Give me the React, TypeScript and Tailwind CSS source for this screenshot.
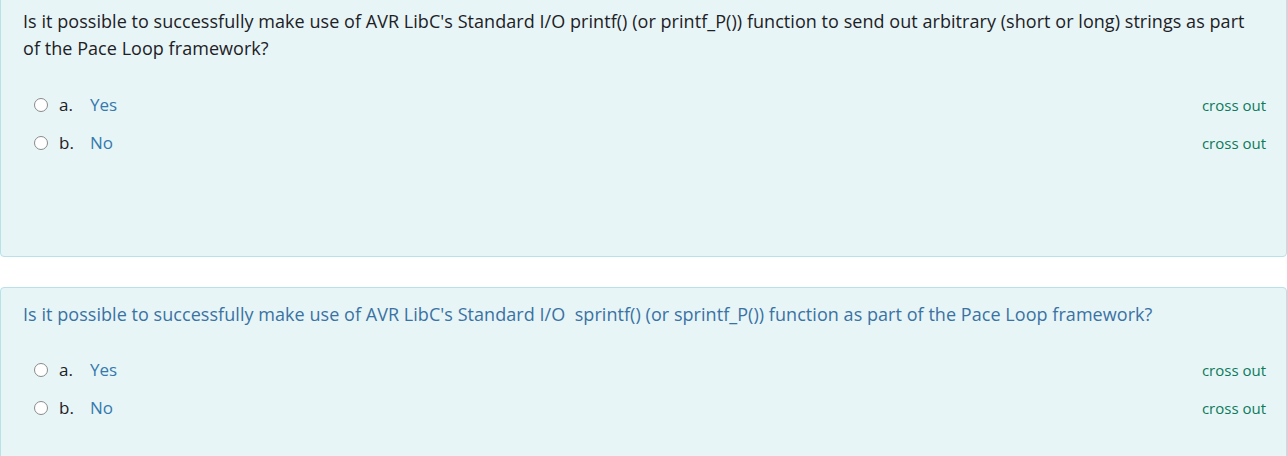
import React from "react";

type Question = {
  text: React.ReactNode;
  tone: "dark" | "blue";
  first?: boolean;
};

const OPTIONS = [
  { key: "a.", label: "Yes" },
  { key: "b.", label: "No" },
];

function Option({ k, label }: { k: string; label: string }) {
  return (
    <div className="flex items-center h-[38px] text-[17px]">
      <span className="ml-[33px] w-[14px] h-[14px] rounded-full border-[1.5px] border-[#8a8a8a] bg-white shrink-0" />
      <span className="ml-[11px] w-[31px] text-[#1d2125]">{k}</span>
      <span className="text-[#3579ad]">{label}</span>
      <span className="ml-auto mr-[20px] text-[15px] text-[#0d7a5a]">cross out</span>
    </div>
  );
}

function QuestionCard({ q }: { q: Question }) {
  return (
    <div
      className={
        "bg-[#e7f5f7] border border-[#b8e1e8] rounded-[4px] px-[22px] " +
        (q.first ? "-mt-[6px] pt-[13px] h-[263px]" : "pt-[13px] h-[200px]")
      }
    >
      <p className={"text-[18px] tracking-[0.05px] leading-[27px] " + (q.tone === "dark" ? "text-[#1d2125]" : "text-[#3a72a3]")}>{q.text}</p>
      <div className={(q.first ? "mt-[24px]" : "mt-[23px]") + " -mx-[22px]"}>
        {OPTIONS.map(o => <Option key={o.key} k={o.key} label={o.label} />)}
      </div>
    </div>
  );
}

export default function App() {
  const questions: Question[] = [
    {
      first: true,
      tone: "dark",
      text: "Is it possible to successfully make use of AVR LibC's Standard I/O printf() (or printf_P()) function to send out arbitrary (short or long) strings as part of the Pace Loop framework?",
    },
    {
      tone: "blue",
      text: "Is it possible to successfully make use of AVR LibC's Standard I/O\u00a0 sprintf() (or sprintf_P()) function as part of the Pace Loop framework?",
    },
  ];

  return (
    <div className="w-[1287px] h-[456px] overflow-hidden bg-white font-['Open_Sans','Noto_Sans',sans-serif]">
      <div className="flex flex-col gap-[30px]">
        {questions.map((q, i) => <QuestionCard key={i} q={q} />)}
      </div>
    </div>
  );
}
